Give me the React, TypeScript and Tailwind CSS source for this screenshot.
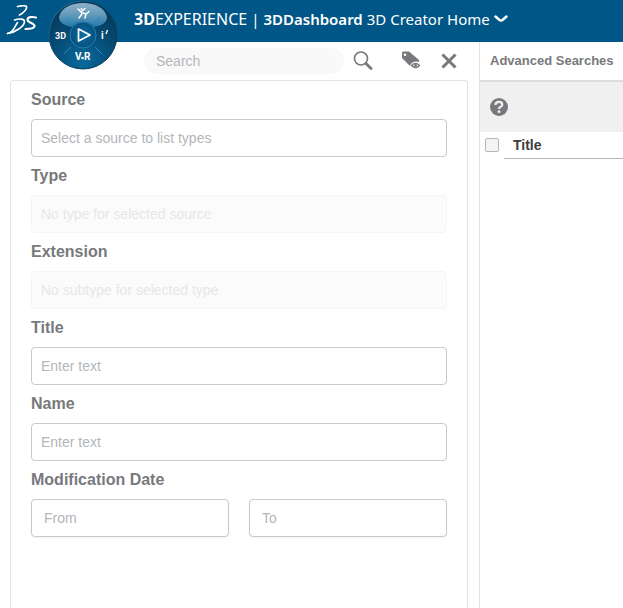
import { useId } from "react";

function DassaultLogo() {
  return (
    <svg viewBox="0 0 32 32" className="h-8 w-8 shrink-0" fill="none" stroke="#fff" strokeLinecap="round" strokeLinejoin="round" aria-hidden="true">
      <path d="M11.500 1.500C15 0.800 19.500 0.500 20.500 1.500C21 4 18 7.500 13.500 10" strokeWidth="1.700" />
      <path d="M8.500 15C13 13.500 18.500 13.500 18.500 16.500C18.500 21 10 27.500 1.500 28.500" strokeWidth="1.700" />
      <path d="M11.500 17.500L8 23.500C6.500 26 5 28 1.500 28.500" strokeWidth="1.500" />
      <path d="M30 12.500C26 11.500 21.500 12 21.500 14.500C21.500 18 28.500 18 28.500 21C28.500 23.500 24 24 19.500 24" strokeWidth="2.200" />
    </svg>
  );
}

function Compass() {
  return (
    <svg viewBox="0 0 72 72" className="h-[72px] w-[72px]" aria-hidden="true">
      <defs>
        <radialGradient id="disc" cx="50%" cy="90%" r="80%">
          <stop offset="0" stopColor="#0a6a9c" />
          <stop offset="0.5" stopColor="#06507b" />
          <stop offset="1" stopColor="#063a5a" />
        </radialGradient>
        <linearGradient id="rim" x1="0" y1="0" x2="1" y2="1">
          <stop offset="0" stopColor="#3d82a8" />
          <stop offset="0.4" stopColor="#0a466b" />
          <stop offset="1" stopColor="#07334f" />
        </linearGradient>
        <linearGradient id="gloss" x1="0" y1="0" x2="0" y2="1">
          <stop offset="0" stopColor="#8fb2c8" />
          <stop offset="0.5" stopColor="#6199bb" />
          <stop offset="1" stopColor="#2379a9" />
        </linearGradient>
        <radialGradient id="hub">
          <stop offset="0" stopColor="#0d6b9d" />
          <stop offset="1" stopColor="#07517e" />
        </radialGradient>
      </defs>
      <circle cx="36" cy="36" r="34" fill="url(#disc)" stroke="url(#rim)" />
      <path d="M12 18C14 9 24 4 36 4C48 4 58 9 60 18C60 25 52 27 47 28A14 14 0 0 0 25 28C20 27 12 25 12 18Z" fill="url(#gloss)" />
      <path d="M19 18l7 7M53 18l-7 7M17 55l7-7M55 55l-7-7" stroke="#238ac0" strokeWidth="1" />
      <circle cx="36" cy="36" r="13" fill="url(#hub)" stroke="#2380b2" />
      <path d="M31.500 30L43 36L31.500 42Z" fill="none" stroke="#fff" strokeWidth="1.700" strokeLinejoin="round" />
      <g stroke="#fff" strokeWidth="1.500" fill="none" strokeLinecap="round">
        <path d="M31 10L34 13L38 9.500M34 13L35 15L32 19" />
        <path d="M36 14L39 15L42 12.500M39 15L38 19" />
      </g>
      <circle cx="34.500" cy="10" r="1" fill="#fff" />
      <g fill="#fff" fontFamily="Roboto, Liberation Sans, Arial, sans-serif" fontWeight="700">
        <text x="8" y="39.500" fontSize="9">3D</text>
        <text x="54" y="40" fontSize="10">i</text>
        <text x="28" y="61" fontSize="10">V</text>
        <text x="37" y="61" fontSize="10">R</text>
      </g>
      <circle cx="35.500" cy="59" r="1.300" fill="#fff" />
      <path d="M60.500 31l-1.500 4" stroke="#fff" strokeWidth="1.400" />
    </svg>
  );
}

type FieldProps = { label: string; placeholder: string; disabled?: boolean };

function Field({ label, placeholder, disabled }: FieldProps) {
  const id = useId();
  return (
    <div>
      <label htmlFor={id} className="block text-base leading-[38px] font-bold text-[#77797c]">
        {label}
      </label>
      <input
        id={id}
        type="text"
        placeholder={placeholder}
        disabled={disabled}
        className="block h-[38px] w-full rounded border border-[#c8c9cb] bg-white px-[9px] text-sm text-[#3d3d3d] placeholder:text-[#b4b6ba] disabled:border-[#f5f5f5] disabled:bg-[#fbfbfb] disabled:placeholder:text-[#e6e7e8]"
      />
    </div>
  );
}

function DateField({ label }: { label: string }) {
  return (
    <input
      type="text"
      aria-label={`Modification date ${label}`}
      placeholder={label}
      className="h-[38px] w-full rounded border border-[#c8c9cb] bg-white px-3 text-sm shadow-xs placeholder:text-[#b4b6ba]"
    />
  );
}

function TopBar() {
  return (
    <header className="relative z-10 flex h-[42px] items-center bg-[#005686] pl-[6px] text-white">
      <DassaultLogo />
      <button type="button" aria-label="Compass" className="-mt-px ml-[9px] shrink-0 self-start">
        <Compass />
      </button>
      <div className="ml-[15px] flex items-center pb-1 font-['Noto_Sans',sans-serif] text-[15px] leading-5 whitespace-nowrap">
        <span className="text-base leading-5"><b>3D</b>EXPERIENCE</span>
        <span className="mx-1">|</span>
        <span className="font-semibold">3DDashboard</span>
        <button type="button" className="ml-1 flex items-center gap-1">
          3D Creator Home
          <svg viewBox="0 0 14 8" className="h-2 w-[14px]" fill="none" stroke="#fff" strokeWidth="2.500" strokeLinecap="round" aria-hidden="true">
            <path d="M1.500 1.500L5.500 5Q7 6 8.500 5L12.500 1.500" />
          </svg>
        </button>
      </div>
    </header>
  );
}

function SearchBar() {
  return (
    <div className="flex h-[38px] items-center pl-36 text-[#77797c]">
      <input
        type="search"
        aria-label="Search"
        placeholder="Search"
        className="h-[26px] min-w-0 flex-1 rounded-full bg-[#f9f9f9] px-3 text-sm placeholder:text-[#b4b6ba]"
      />
      <button type="button" aria-label="Run search" className="ml-[9px]">
        <svg viewBox="0 0 20 20" className="h-5 w-5" fill="none" stroke="currentColor" aria-hidden="true">
          <circle cx="8" cy="7.500" r="6.500" strokeWidth="1.600" />
          <path d="M13 12.500l5 5" strokeWidth="2.800" strokeLinecap="round" />
        </svg>
      </button>
      <button type="button" aria-label="Tags" className="ml-7">
        <svg viewBox="0 0 20 20" className="h-5 w-5" aria-hidden="true">
          <path fill="currentColor" fillRule="evenodd" d="M1 1.500L2 0.500H8L18 9V11C14 9.500 10 11 9 15L1 7ZM4 2.500A1.300 1.300 0 1 0 4 5.100A1.300 1.300 0 1 0 4 2.500Z" />
          <path d="M10.500 14.500Q14.500 10.500 18.500 14.500Q14.500 18.500 10.500 14.500Z" fill="none" stroke="currentColor" strokeWidth="1.200" />
          <circle cx="14.500" cy="14.500" r="1.500" fill="currentColor" />
        </svg>
      </button>
      <button type="button" aria-label="Close" className="mr-[22px] ml-5">
        <svg viewBox="0 0 16 16" className="h-4 w-4" fill="none" stroke="currentColor" strokeWidth="3" aria-hidden="true">
          <path d="M1.500 1.500l13 13M14.500 1.500L1.500 14.500" />
        </svg>
      </button>
    </div>
  );
}

export default function App() {
  return (
    <div className="flex min-h-screen flex-col bg-white font-['Liberation_Sans',Arial,sans-serif]">
      <TopBar />
      <main className="flex flex-1">
        <section className="flex min-w-0 flex-1 flex-col">
          <SearchBar />
          <form className="mr-[11px] ml-[10px] flex-1 rounded-t border border-b-0 border-[#e2e4e3] px-5 pb-5">
            <Field label="Source" placeholder="Select a source to list types" />
            <Field label="Type" placeholder="No type for selected source" disabled />
            <Field label="Extension" placeholder="No subtype for selected type" disabled />
            <Field label="Title" placeholder="Enter text" />
            <Field label="Name" placeholder="Enter text" />
            <fieldset>
              <legend className="text-base leading-[38px] font-bold text-[#77797c]">Modification Date</legend>
              <div className="grid grid-cols-2 gap-5">
                <DateField label="From" />
                <DateField label="To" />
              </div>
            </fieldset>
          </form>
        </section>
        <aside className="w-36 shrink-0 border-l border-[#e2e4e3]">
          <h2 className="h-10 border-b-2 border-[#dcdcdc] pl-[10px] text-[13px] leading-[38px] font-bold whitespace-nowrap text-[#77797c]">
            Advanced Searches
          </h2>
          <div className="flex h-[50px] items-center bg-[#f0f0f0] pl-[10px]">
            <button type="button" aria-label="Help" className="text-[#77797c]">
              <svg viewBox="0 0 18 18" className="h-[18px] w-[18px]" aria-hidden="true">
                <circle cx="9" cy="9" r="9" fill="currentColor" />
                <path d="M5.500 7Q5.500 3.800 9 3.800Q12.300 3.800 12.300 6.500Q12.300 8 10.500 8.700Q9 9.500 9 11" fill="none" stroke="#f0f0f0" strokeWidth="2.200" />
                <circle cx="9" cy="13.700" r="1.400" fill="#f0f0f0" />
              </svg>
            </button>
          </div>
          <table className="w-full border-collapse text-left">
            <thead>
              <tr className="h-[26px]">
                <th className="w-6 p-0 pl-[5px]">
                  <input type="checkbox" aria-label="Select all" className="block h-[14px] w-[14px] appearance-none rounded-xs border border-[#b4b6ba] bg-[#f4f4f4]" />
                </th>
                <th className="border-b border-[#b4b6ba] p-0 pl-[9px] text-sm font-bold text-[#3d3d3d]">Title</th>
              </tr>
            </thead>
          </table>
        </aside>
      </main>
    </div>
  );
}
